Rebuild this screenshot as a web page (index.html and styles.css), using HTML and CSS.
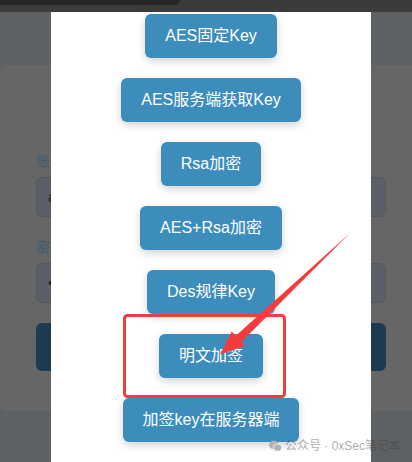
FILE: index.html
```html
<!DOCTYPE html>
<html lang="zh-CN">
<head>
  <meta charset="UTF-8">
  <meta name="viewport" content="width=device-width, initial-scale=1.0">
  <title>加密方式</title>
  <link rel="stylesheet" href="styles.css">
</head>
<body>
  <div class="browser-bar">
    <div class="browser-tab"></div>
  </div>

  <div class="viewport">
    <!-- Login page behind the dialog -->
    <div class="page">
      <div class="login-card">
        <label class="field-label">账号</label>
        <div class="field-input">admin</div>
        <label class="field-label">密码</label>
        <div class="field-input password">•••••••</div>
        <div class="login-btn"></div>
      </div>
    </div>

    <!-- Dialog with the encryption modes -->
    <div class="modal">
      <div class="mode-btn">AES固定Key</div>
      <div class="mode-btn">AES服务端获取Key</div>
      <div class="mode-btn">Rsa加密</div>
      <div class="mode-btn">AES+Rsa加密</div>
      <div class="mode-btn">Des规律Key</div>
      <div class="mode-btn">明文加签</div>
      <div class="mode-btn">加签key在服务器端</div>
    </div>

    <!-- Red markup drawn on the screenshot -->
    <svg class="annotation" width="412" height="450" viewBox="0 12 412 450">
      <rect x="124.5" y="315.5" width="160" height="81" rx="3" fill="none" stroke="#f53c3c" stroke-width="3"/>
      <polygon points="350,233 241.5,341.8 245.2,346 220,354.5 231.8,331.5 235.8,335.8" fill="#f53c3c"/>
    </svg>

    <div class="watermark">
      <svg class="wechat" width="13" height="12" viewBox="0 0 13 12">
        <ellipse cx="5" cy="5" rx="5" ry="4.2" fill="currentColor"/>
        <ellipse cx="8.6" cy="7.6" rx="4.2" ry="3.6" fill="currentColor" stroke="#fff" stroke-width="0.8"/>
      </svg>
      <span>公众号 · 0xSec笔记本</span>
    </div>
  </div>
</body>
</html>
```

FILE: styles.css
```css
body {
  margin: 0;
  width: 412px;
  height: 462px;
  overflow: hidden;
  font-family: "Liberation Sans", "Noto Sans CJK SC", sans-serif;
  background: #5e6163;
}

.browser-bar {
  height: 12px;
  background: #3b3b3b;
}

.browser-tab {
  width: 180px;
  height: 5px;
  background: #272727;
  border-bottom-right-radius: 6px;
}

.viewport {
  position: relative;
  height: 450px;
  overflow: hidden;
}

.page {
  padding-top: 53px;
}

.login-card {
  width: 350px;
  padding: 86px 36px 40px;
  background: #666666;
  border-radius: 6px;
}

.field-label {
  display: block;
  font-size: 14px;
  line-height: 20px;
  color: #3f5d74;
  margin-bottom: 6px;
}

.field-input {
  box-sizing: border-box;
  height: 40px;
  padding: 0 11px;
  margin-bottom: 20px;
  background: #5b5f67;
  border: 1px solid #54585d;
  border-radius: 6px;
  font-size: 15px;
  line-height: 38px;
  color: #1e1e1e;
}

.password {
  letter-spacing: 2px;
}

.login-btn {
  height: 48px;
  background: #1c3b50;
  border-radius: 6px;
}

.modal {
  position: absolute;
  top: 0;
  bottom: 0;
  left: 51px;
  width: 320px;
  background: #ffffff;
  padding-top: 2px;
  display: flex;
  flex-direction: column;
  align-items: center;
  gap: 20px;
}

.mode-btn {
  height: 44px;
  padding: 0 20px;
  background: #3c8dbc;
  color: #ffffff;
  font-size: 16px;
  line-height: 44px;
  border-radius: 6px;
  box-shadow: 0 3px 8px rgba(0, 0, 0, 0.18);
  white-space: nowrap;
}

.annotation {
  position: absolute;
  top: 0;
  left: 0;
}

.watermark {
  position: absolute;
  left: 269px;
  top: 426px;
  display: flex;
  align-items: center;
  gap: 3px;
  font-size: 12px;
  line-height: 16px;
  white-space: nowrap;
  color: rgba(60, 60, 60, 0.45);
}

.wechat {
  color: #b3b3b3;
}
```
